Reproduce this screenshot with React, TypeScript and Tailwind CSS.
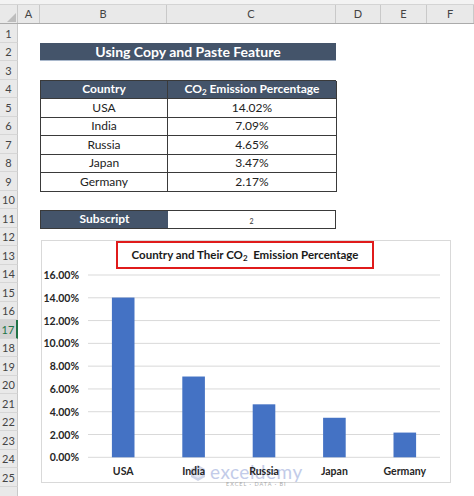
import React from "react";

const columns = [
    { label: "A", width: "w-[22px]" },
    { label: "B", width: "w-[127px]" },
    { label: "C", width: "w-[169px]" },
    { label: "D", width: "w-[45px]" },
    { label: "E", width: "w-[46px]" },
    { label: "F", width: "w-[47px]" },
];

const emissions = [
    { country: "USA", value: 14.02 },
    { country: "India", value: 7.09 },
    { country: "Russia", value: 4.65 },
    { country: "Japan", value: 3.47 },
    { country: "Germany", value: 2.17 },
];

function ColumnHeaders() {
    return (
        <>
            <div className="h-[5px] bg-[#f3f3f3] border-b border-[#d4d4d4]" />
            <div className="flex h-[19px] bg-[#e9e9e9] border-b border-[#ababab]">
                <div className="relative w-[18px] border-r border-[#c9c9c9]">
                    <svg className="absolute left-0 top-0" width="18" height="19">
                        <polygon points="16,8 16,17 7,17" fill="#bdbdbd" />
                    </svg>
                </div>
                {columns.map((col) => (
                    <div
                        key={col.label}
                        className={`${col.width} flex items-center justify-center border-r border-[#c9c9c9] text-[11px] text-[#444]`}
                    >
                        {col.label}
                    </div>
                ))}
            </div>
        </>
    );
}

function RowHeaders() {
    // row 26 is only partly on screen, its number falls below the edge
    return (
        <div className="w-[18px] shrink-0 bg-[#e9e9e9]">
            {Array(26).fill(null).map((_, index) => (
                <div
                    key={index}
                    className={`h-[18.5px] flex items-center justify-center pt-[2px] text-[11px] border-b border-[#d6d6d6] ${
                        index === 16
                            ? "bg-[#d3d3d3] text-[#217346] border-r-2 border-r-[#217346]"
                            : "text-[#444] border-r border-r-[#c9c9c9]"
                    }`}
                >
                    {index < 25 ? index + 1 : ""}
                </div>
            ))}
        </div>
    );
}

function EmissionTable() {
    return (
        <div className="grid grid-cols-[127px_169px] w-[296px] border-l border-t border-[#3a3a3a] text-[12px]">
            <div className="h-[18.5px] flex items-center justify-center bg-[#44546a] text-white font-bold border-r border-b border-[#3a3a3a]">
                Country
            </div>
            <div className="h-[18.5px] flex items-center justify-center bg-[#44546a] text-white font-bold border-r border-b border-[#3a3a3a]">
                <span>
                    CO<sub className="text-[8px]">2</sub> Emission Percentage
                </span>
            </div>
            {emissions.map((row) => (
                <React.Fragment key={row.country}>
                    <div className="h-[18.5px] flex items-center justify-center text-[#222] border-r border-b border-[#3a3a3a]">
                        {row.country}
                    </div>
                    <div className="h-[18.5px] flex items-center justify-center text-[#222] border-r border-b border-[#3a3a3a]">
                        {row.value.toFixed(2)}%
                    </div>
                </React.Fragment>
            ))}
        </div>
    );
}

function EmissionChart() {
    const top = 6;
    const bottom = 188.3;
    const left = 46;
    const right = 398;
    const perUnit = (bottom - top) / 16;
    const slot = (right - left) / emissions.length;

    return (
        <div className="relative mt-[11.5px] ml-[1px] w-[410px] h-[243px] border border-[#d9d9d9] bg-white">
            {/* watermark sits behind the chart labels */}
            <div className="absolute left-[147px] top-[222px] flex items-start opacity-80 pointer-events-none">
                <svg width="18" height="18" viewBox="0 0 18 18" className="mt-[1px]">
                    <polygon points="9,1 16,5 16,13 9,17 2,13 2,5" fill="#c3cbe3" />
                    <polygon points="9,5 13,7.5 13,12 9,14 5,12 5,7.5" fill="#dfe4f2" />
                </svg>
                <div className="ml-[3px] flex flex-col items-center leading-none">
                    <span className="text-[19px] text-[#b4bfe4] tracking-[0.5px] leading-[18px]">exceldemy</span>
                    <span className="text-[5.5px] text-[#9a9a9a] tracking-[1px] mt-[1px]">EXCEL · DATA · BI</span>
                </div>
            </div>

            <div className="relative mr-[76px] ml-[74px] h-[28px] border-2 border-[#e01b1b] flex items-center justify-center text-[11.5px] font-bold text-[#1a1a1a]">
                <span>
                    Country and Their CO<sub className="text-[8px]">2</sub>&nbsp; Emission Percentage
                </span>
            </div>
            <svg width="408" height="213" className="relative block">
                {Array(9).fill(null).map((_, i) => {
                    const y = bottom - i * 2 * perUnit;
                    return (
                        <g key={i}>
                            <line x1={left} x2={right} y1={y} y2={y} stroke="#d9d9d9" strokeWidth="1" />
                            <text
                                x="37"
                                y={y + 4}
                                textAnchor="end"
                                fontSize="10.5"
                                fontWeight="700"
                                fill="#262626"
                                fontFamily="Lato, sans-serif"
                            >
                                {(i * 2).toFixed(2)}%
                            </text>
                        </g>
                    );
                })}
                {emissions.map((row, i) => {
                    const cx = left + slot * (i + 0.5);
                    const h = row.value * perUnit;
                    return (
                        <g key={row.country}>
                            <rect x={cx - 11.3} y={bottom - h} width="22.6" height={h} fill="#4472c4" />
                            <text
                                x={cx}
                                y="206"
                                textAnchor="middle"
                                fontSize="10.5"
                                fontWeight="700"
                                fill="#262626"
                                fontFamily="Lato, sans-serif"
                            >
                                {row.country}
                            </text>
                        </g>
                    );
                })}
            </svg>
        </div>
    );
}

export default function App() {
    return (
        <div className="w-[474px] h-[496px] overflow-hidden bg-white font-['Lato','Noto_Sans',sans-serif]">
            <ColumnHeaders />
            <div className="flex">
                <RowHeaders />
                <div className="flex-1 pl-[22px]">
                    <div className="h-[18.5px]" />
                    <div className="h-[18.5px] w-[296px] bg-[#44546a] border-b border-[#a9b8cc] flex items-center justify-center text-white font-bold text-[14px]">
                        Using Copy and Paste Feature
                    </div>
                    <div className="h-[18.5px]" />
                    <EmissionTable />
                    <div className="h-[18.5px]" />
                    <div className="flex w-[296px] h-[18.5px] border border-[#3a3a3a]">
                        <div className="w-[127px] bg-[#44546a] flex items-center justify-center text-white font-bold text-[12px]">
                            Subscript
                        </div>
                        <div className="flex-1 flex items-end justify-center pb-[1px] text-[7px] text-[#333]">
                            2
                        </div>
                    </div>
                    <EmissionChart />
                </div>
            </div>
        </div>
    );
}
